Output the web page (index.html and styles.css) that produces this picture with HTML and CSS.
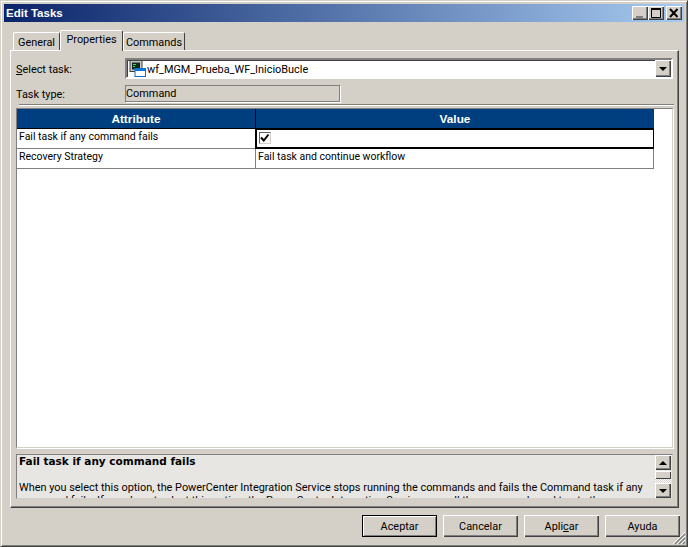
FILE: index.html
```html
<!DOCTYPE html>
<html lang="en">
<head>
<meta charset="utf-8">
<title>Edit Tasks</title>
<link rel="stylesheet" href="styles.css">
</head>
<body>
<div class="window">
  <div class="titlebar">
    <span class="title">Edit Tasks</span>
    <div class="caption-buttons">
      <span class="cap-btn"><svg width="16" height="14" viewBox="0 0 16 14"><rect x="4" y="10" width="7" height="2" fill="#808080"/></svg></span>
      <span class="cap-btn"><svg width="16" height="14" viewBox="0 0 16 14"><path d="M3.500 2.500h9v9h-9z" fill="none" stroke="#000"/><rect x="3" y="2" width="10" height="2" fill="#000"/></svg></span>
      <span class="cap-btn cap-close"><svg width="16" height="14" viewBox="0 0 16 14"><path d="M4 3l7.500 8M11.500 3L4 11" stroke="#000" stroke-width="2" fill="none"/></svg></span>
    </div>
  </div>
  <div class="tabs">
    <div class="tab tab-first">General</div>
    <div class="tab tab-active">Properties</div>
    <div class="tab">Commands</div>
  </div>
  <div class="panel">
    <div class="form-row row-select">
      <label class="field-label field-label-select"><u>S</u>elect task:</label>
      <div class="combo">
        <svg class="task-icon" width="17" height="17" viewBox="0 0 17 17">
          <rect x="1" y="0.500" width="12" height="11" fill="#c8c8c8" stroke="#404040"/>
          <rect x="3" y="2.500" width="8" height="7" fill="#0c2a18"/>
          <rect x="4" y="4" width="3" height="1" fill="#3fdc5c"/>
          <rect x="4" y="6" width="2" height="1" fill="#3fdc5c"/>
          <rect x="6" y="8.500" width="10.500" height="8" fill="#fff" stroke="#0a6ad0"/>
          <rect x="6" y="8.500" width="10.500" height="2.500" fill="#0a78e0"/>
        </svg>
        <span class="combo-text">wf_MGM_Prueba_WF_InicioBucle</span>
        <span class="scroll-btn combo-btn"><i class="arrow-down"></i></span>
      </div>
    </div>
    <div class="form-row row-type">
      <label class="field-label">Task type:</label>
      <div class="readonly-field">Command</div>
    </div>
    <div class="separator"></div>
    <div class="grid-frame">
      <div class="grid-head">
        <div class="col-a head-cell">Attribute</div>
        <div class="col-b head-cell">Value</div>
      </div>
      <div class="grid-row">
        <div class="col-a cell">Fail task if any command fails</div>
        <div class="col-b cell cell-focus"><span class="checkbox"><svg width="10" height="10" viewBox="0 0 10 10"><path d="M1 4.500l2.800 3 4.700-6" stroke="#000" stroke-width="2" fill="none"/></svg></span></div>
      </div>
      <div class="grid-row">
        <div class="col-a cell">Recovery Strategy</div>
        <div class="col-b cell">Fail task and continue workflow</div>
      </div>
    </div>
    <div class="desc">
      <div class="desc-body">
        <p class="desc-title">Fail task if any command fails</p>
        <p class="desc-text">When you select this option, the PowerCenter Integration Service stops running the commands and fails the Command task if any command fails. If you do not select this option, the PowerCenter Integration Service runs all the commands and treats the</p>
      </div>
      <div class="desc-scroll">
        <span class="scroll-btn scroll-end"><i class="arrow-up"></i></span>
        <span class="scroll-thumb"></span>
        <span class="scroll-track"></span>
        <span class="scroll-btn scroll-end"><i class="arrow-down"></i></span>
      </div>
    </div>
  </div>
  <div class="footer">
    <button class="btn btn-default">Aceptar</button>
    <button class="btn">Cancelar</button>
    <button class="btn">Apli<u>c</u>ar</button>
    <button class="btn">Ayuda</button>
  </div>
  <svg class="grip" width="14" height="14" viewBox="0 0 14 14"><path d="M13 3L3 13M13 7L7 13M13 11L11 13" stroke="#808080" stroke-width="1.500" fill="none"/><path d="M13 1L1 13M13 5L5 13M13 9L9 13" stroke="#fff" fill="none"/></svg>
</div>
</body>
</html>
```
FILE: styles.css
```css
* { box-sizing: border-box; }
html, body { margin: 0; padding: 0; }
body { width: 688px; height: 547px; overflow: hidden; background: #d4d0c8; }
.window {
  position: relative;
  width: 688px; height: 547px;
  background: #d4d0c8;
  padding: 3px;
  border: 1px solid;
  border-color: #d4d0c8 #404040 #404040 #d4d0c8;
  box-shadow: inset 1px 1px 0 #fff, inset -1px -1px 0 #808080;
  font-family: Roboto, "Liberation Sans", sans-serif;
  font-size: 10.9px;
  color: #000;
}
.titlebar {
  height: 18px;
  display: flex; align-items: center; justify-content: space-between;
  background: linear-gradient(to right, #0a246a, #a6caf0);
  padding: 0 2px 0 2px;
}
.title { color: #fff; font-family: "Liberation Sans", sans-serif; font-weight: bold; font-size: 11.5px; }
.caption-buttons { display: flex; }
.cap-btn {
  width: 16px; height: 14px; display: block;
  background: #d4d0c8;
  box-shadow: inset 1px 1px 0 #fff, inset -1px -1px 0 #404040, inset -2px -2px 0 #808080;
}
.cap-btn svg { display: block; }
.cap-close { margin-left: 2px; }
.tabs { display: flex; align-items: flex-end; height: 28px; padding-left: 9px; }
.tab {
  height: 18px; padding-top: 3px;
  width: 62px;
  text-align: center;
  white-space: nowrap;
  border-top: 1px solid #fff; border-left: 1px solid #fff;
  border-right: 1px solid #404040;
  border-radius: 2px 2px 0 0;
}
.tab-first { width: 47px; }
.tab-active {
  height: 21px; width: 63px; padding-top: 2px; margin-bottom: -1px;
  position: relative; z-index: 1; background: #d4d0c8;
}
.panel {
  height: 458px;
  margin-left: 6px; width: 669px;
  border: 1px solid;
  border-color: #fff #404040 #404040 #fff;
  box-shadow: inset -1px -1px 0 #808080;
  padding: 7px 5px 0 5px;
}
.form-row { display: flex; align-items: center; }
.field-label { width: 109px; flex: none; }
.field-label-select { padding-top: 2px; }
.row-select { height: 21px; }
.combo {
  flex: none; width: 548px; height: 21px;
  display: flex; align-items: center;
  background: #fff;
  border: 2px solid; border-color: #808080 #fff #fff #808080;
  box-shadow: inset 1px 1px 0 #404040;
  padding-left: 2px;
}
.task-icon { flex: none; margin-top: -1px; }
.combo-text { margin-left: 1px; padding-top: 2px; flex: 1; }
.scroll-btn {
  display: flex; align-items: center; justify-content: center;
  width: 16px; height: 16px; flex: none;
  background: #d4d0c8;
  box-shadow: inset 1px 1px 0 #fff, inset -1px -1px 0 #404040, inset -2px -2px 0 #808080;
}
.combo-btn { height: 17px; }
.scroll-end { height: 15px; }
.arrow-down, .arrow-up { display: block; width: 0; height: 0; border-left: 4px solid transparent; border-right: 4px solid transparent; }
.arrow-down { border-top: 4px solid #000; }
.arrow-up { border-bottom: 4px solid #000; }
.row-type { height: 18px; margin-top: 6px; }
.readonly-field {
  width: 216px; height: 18px; line-height: 15px;
  border: 1px solid; border-color: #808080 #fff #fff #808080;
  box-shadow: inset -1px -1px 0 #808080;
}
.separator { height: 2px; margin: 1px 0 0 3px; width: 655px; background: #808080; border-bottom: 1px solid #fff; }
.grid-frame {
  height: 340px; margin-top: 2px; width: 657px;
  background: #fff;
  border: 1px solid; border-color: #808080 #d4d0c8 #d4d0c8 #808080;
  box-shadow: 1px 1px 0 #fff;
}
.grid-head { display: flex; height: 20px; width: 637px; border-bottom: 1px solid #000; background: #003f7f; }
.head-cell { color: #fff; font-family: "Liberation Sans", sans-serif; font-weight: bold; text-align: center; line-height: 20px; font-size: 11.8px; }
.col-a { width: 238px; flex: none; }
.col-b { width: 399px; flex: none; border-left: 1px solid #000; }
.grid-row { display: flex; width: 637px; height: 20px; border-bottom: 1px solid #808080; border-right: 1px solid #808080; font-size: 10.500px; }
.cell { padding-left: 2px; line-height: 15px; }
.grid-row .col-b { border-left: 1px solid #808080; }
.grid-row .cell-focus { width: 399px; border: 2px solid #000; border-right-width: 1px; margin: -1px 0; padding: 2px 0 0 2px; }
.checkbox { display: block; width: 12px; height: 12px; border: 1px solid; border-color: #606060 #d4d0c8 #d4d0c8 #606060; }
.checkbox svg { display: block; }
.desc {
  display: flex;
  height: 45px; margin-top: 6px; width: 657px;
  background: #e8e6e2;
  border: 1px solid; border-color: #808080 #d4d0c8 #d4d0c8 #808080;
  overflow: hidden;
}
.desc-body { flex: none; width: 638px; padding-left: 2px; overflow: hidden; }
.desc-body p { margin: 0; line-height: 13px; }
.desc-title { font-family: "DejaVu Sans", sans-serif; font-weight: bold; font-size: 10.500px; }
.desc-text { margin-top: 13px !important; }
.desc-scroll { display: flex; flex-direction: column; width: 16px; }
.scroll-thumb { display: block; height: 8px; margin-top: 1px; flex: none; background: #d4d0c8; box-shadow: inset 1px 1px 0 #fff, inset -1px -1px 0 #404040; }
.scroll-track { display: block; height: 4px; flex: none; background: repeating-conic-gradient(#fff 0 25%, #d4d0c8 0 50%) 0 0 / 2px 2px; }
.footer { display: flex; gap: 6px; padding: 7px 0 0 358px; }
.btn {
  width: 75px; height: 22px; padding: 0;
  font: inherit; color: #000;
  background: #d4d0c8;
  border: none;
  box-shadow: inset 1px 1px 0 #fff, inset -1px -1px 0 #404040, inset -2px -2px 0 #808080;
}
.btn-default { border: 1px solid #000; box-shadow: inset 1px 1px 0 #fff, inset -1px -1px 0 #808080; }
.grip { position: absolute; right: 1px; bottom: 1px; }
```
